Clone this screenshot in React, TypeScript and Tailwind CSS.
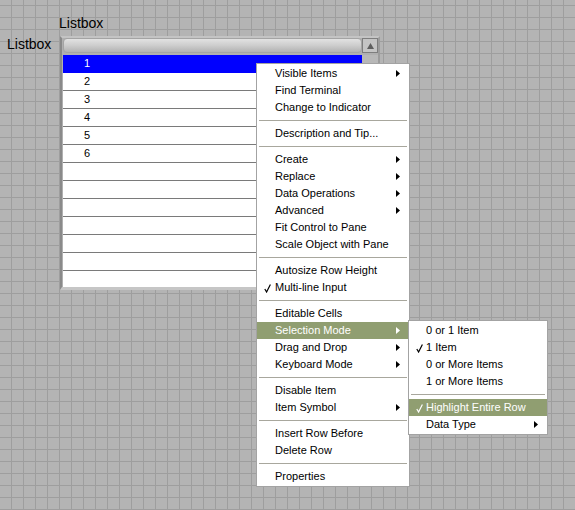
const font = { fontFamily: '"Liberation Sans", Arial, sans-serif' };

type Item = { label: string; arrow?: boolean; check?: boolean; active?: boolean } | "sep";

const mainMenu: Item[] = [
    { label: "Visible Items", arrow: true },
    { label: "Find Terminal" },
    { label: "Change to Indicator" },
    "sep",
    { label: "Description and Tip..." },
    "sep",
    { label: "Create", arrow: true },
    { label: "Replace", arrow: true },
    { label: "Data Operations", arrow: true },
    { label: "Advanced", arrow: true },
    { label: "Fit Control to Pane" },
    { label: "Scale Object with Pane" },
    "sep",
    { label: "Autosize Row Height" },
    { label: "Multi-line Input", check: true },
    "sep",
    { label: "Editable Cells" },
    { label: "Selection Mode", arrow: true, active: true },
    { label: "Drag and Drop", arrow: true },
    { label: "Keyboard Mode", arrow: true },
    "sep",
    { label: "Disable Item" },
    { label: "Item Symbol", arrow: true },
    "sep",
    { label: "Insert Row Before" },
    { label: "Delete Row" },
    "sep",
    { label: "Properties" },
];

const subMenu: Item[] = [
    { label: "0 or 1 Item" },
    { label: "1 Item", check: true },
    { label: "0 or More Items" },
    { label: "1 or More Items" },
    "sep",
    { label: "Highlight Entire Row", check: true, active: true },
    { label: "Data Type", arrow: true },
];

const Arrow = ({ white }: { white?: boolean }) => (
    <svg width="4" height="7" viewBox="0 0 4 7">
        <path d="M0 0 L4 3.5 L0 7 Z" fill={white ? "#ffffff" : "#000000"} />
    </svg>
);

const Check = ({ white }: { white?: boolean }) => (
    <svg width="7" height="9" viewBox="0 0 7 9">
        <path d="M0.8 5 L2.6 8 L6.4 0.6" fill="none" stroke={white ? "#ffffff" : "#000000"} strokeWidth="1.2" />
    </svg>
);

const Menu = ({ items, indent }: { items: Item[]; indent: string }) => (
    <div className="flex flex-col">
        {items.map((item, i) =>
            item === "sep" ? (
                <div key={i} className="h-[9px] flex items-center px-[2px]">
                    <div className="h-px w-full bg-[#a8a79d]" />
                </div>
            ) : (
                <div
                    key={i}
                    className={`relative h-[17px] flex items-center pr-[9px] ${indent} ${item.active ? "bg-[#909e71] text-white" : "text-black"}`}
                >
                    {item.check && (
                        <span className="absolute left-[7px] top-[5px] flex">
                            <Check white={item.active} />
                        </span>
                    )}
                    <span className="flex-1 whitespace-nowrap">{item.label}</span>
                    {item.arrow && <Arrow white={item.active} />}
                </div>
            )
        )}
    </div>
);

const rows = ["1", "2", "3", "4", "5", "6", "", "", "", "", "", "", ""];

export default function App() {
    return (
        <div
            className="relative w-[575px] h-[510px] overflow-hidden bg-[#b4b4b4] bg-[linear-gradient(to_right,#9e9e9e_1px,transparent_1px),linear-gradient(to_bottom,#9e9e9e_1px,transparent_1px)] bg-size-[12px_12px] bg-position-[11px_5px] text-[11px] leading-[13px]"
            style={font}
        >
            <div className="pl-[59px] pt-[15px] text-[14px] leading-[16px] text-black">Listbox</div>
            <div className="flex items-start mt-[5px]">
                <div className="w-[60px] pl-[7px] pt-[0px] text-[14px] leading-[16px] text-black">Listbox</div>
                <div className="w-[320px] h-[254px] border-l-2 border-t-2 border-r-2 border-b-[3px] border-l-[#8a8a8a] border-t-[#c4c4c4] border-r-[#9c9c9c] border-b-[#c6c6c6] bg-[#b0b0b0] flex flex-col">
                    <div className="flex h-[15px]">
                        <div className="ml-px w-[299px] h-[15px] rounded-[4px] border border-[#a4a4a4] bg-gradient-to-b from-[#e2e2e2] via-[#cdcdcd] to-[#b2b2b2]" />
                        <div className="w-[16px] h-[15px] border border-[#7e7e7e] bg-[#c4c4c4] flex items-center justify-center">
                            <svg width="7" height="6" viewBox="0 0 7 6">
                                <path d="M3.5 0 L7 6 L0 6 Z" fill="#5e5e5e" />
                            </svg>
                        </div>
                    </div>
                    <div className="flex mt-[2px] h-[232px]">
                        <div className="ml-px w-[299px] h-[232px] overflow-hidden bg-white">
                            {rows.map((r, i) => (
                                <div
                                    key={i}
                                    className={`h-[18px] flex items-center pl-[21px] border-b ${i === 0 ? "bg-[#0000ff] border-[#0000ff] text-white" : "border-[#7a7a7a] text-black"}`}
                                >
                                    {r}
                                </div>
                            ))}
                        </div>
                        <div className="w-[16px] bg-[#b8b8b8]" />
                    </div>
                </div>
            </div>

            <div className="absolute left-[256px] top-[63px] w-[154px] bg-white border border-[#a3a3a3] py-px">
                <Menu items={mainMenu} indent="pl-[18px]" />
            </div>

            <div className="absolute left-[408px] top-[320px] w-[140px] bg-white border border-[#a3a3a3] py-px">
                <Menu items={subMenu} indent="pl-[17px]" />
            </div>
        </div>
    );
}
